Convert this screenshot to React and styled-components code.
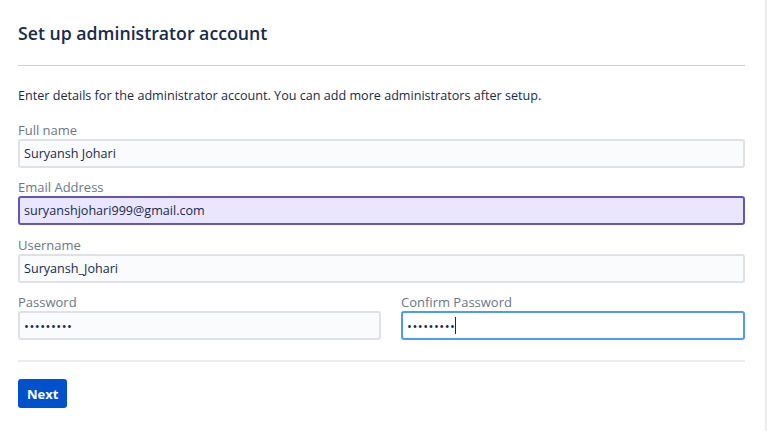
import styled, { createGlobalStyle } from 'styled-components'

const GlobalStyle = createGlobalStyle`
  body {
    margin: 0;
    background: #ffffff;
    font-family: 'Open Sans', 'Noto Sans', sans-serif;
    color: #172b4d;
  }
`

const Page = styled.div`
  width: 767px;
  min-height: 431px;
  box-sizing: border-box;
  border-right: 2px solid #ebecf0;
  padding: 19px 20px 0 18px;
`

const Title = styled.h1`
  margin: 0;
  font-size: 17.7px;
  line-height: 28px;
  font-weight: 600;
  color: #172b4d;
`

const Rule = styled.hr`
  margin: ${({ $top }) => $top}px 0 0;
  border: 0;
  height: ${({ $thick }) => $thick}px;
  background: ${({ $color }) => $color};
`

const Intro = styled.p`
  margin: 20px 0 15px;
  font-size: 12.6px;
  line-height: 20px;
`

const Field = styled.div`
  display: flex;
  flex-direction: column;
  margin-top: ${({ $first }) => $first ? 0 : 10.4}px;
  min-width: 0;
`

const Label = styled.label`
  font-size: 13px;
  line-height: 18px;
  color: #6b778c;
`

const Input = styled.input`
  box-sizing: border-box;
  width: 100%;
  height: 29px;
  margin: 0;
  padding: 0 4px;
  border: 2px solid ${({ $state }) => $state === 'filled' ? '#6554c0' : $state === 'focus' ? '#4c9aff' : '#dfe1e6'};
  border-radius: 3px;
  background: ${({ $state }) => $state === 'filled' ? '#eae6ff' : $state === 'focus' ? '#ffffff' : '#fafbfc'};
  font-family: 'Open Sans', 'Noto Sans', sans-serif;
  font-size: 12.6px;
  color: #172b4d;
  outline: none;

  &[type='password'] {
    letter-spacing: 0.5px;
    font-size: 13px;
  }
`

const Row = styled.div`
  display: grid;
  grid-template-columns: 363px 1fr;
  column-gap: 20px;
`

const CaretWrap = styled.div`
  position: relative;
`

const Caret = styled.span`
  position: absolute;
  top: 6px;
  width: 1px;
  height: 17px;
  background: #172b4d;
`

const Button = styled.button`
  margin-top: 17px;
  height: 29px;
  padding: 0 9px;
  border: 0;
  border-radius: 3px;
  background: #0052cc;
  color: #ffffff;
  font-family: 'Open Sans', 'Noto Sans', sans-serif;
  font-size: 13px;
  font-weight: 700;
  cursor: pointer;
`

export default function App() {
  return (
    <>
      <GlobalStyle />
      <Page>
        <Title>Set up administrator account</Title>
        <Rule $top={18} $thick={1} $color="#cfd2d6" />
        <Intro>Enter details for the administrator account. You can add more administrators after setup.</Intro>
        <Field $first>
          <Label>Full name</Label>
          <Input readOnly value="Suryansh Johari" />
        </Field>
        <Field>
          <Label>Email Address</Label>
          <Input readOnly $state="filled" value="suryanshjohari999@gmail.com" />
        </Field>
        <Field>
          <Label>Username</Label>
          <Input readOnly value="Suryansh_Johari" />
        </Field>
        <Row>
          <Field>
            <Label>Password</Label>
            <Input readOnly type="password" value="123456789" />
          </Field>
          <Field>
            <Label>Confirm Password</Label>
            <CaretWrap>
              <Input readOnly type="password" $state="focus" value="123456789" />
              <Caret style={{ left: 54 }} />
            </CaretWrap>
          </Field>
        </Row>
        <Rule $top={20} $thick={2} $color="#ebecf0" />
        <Button>Next</Button>
      </Page>
    </>
  )
}
